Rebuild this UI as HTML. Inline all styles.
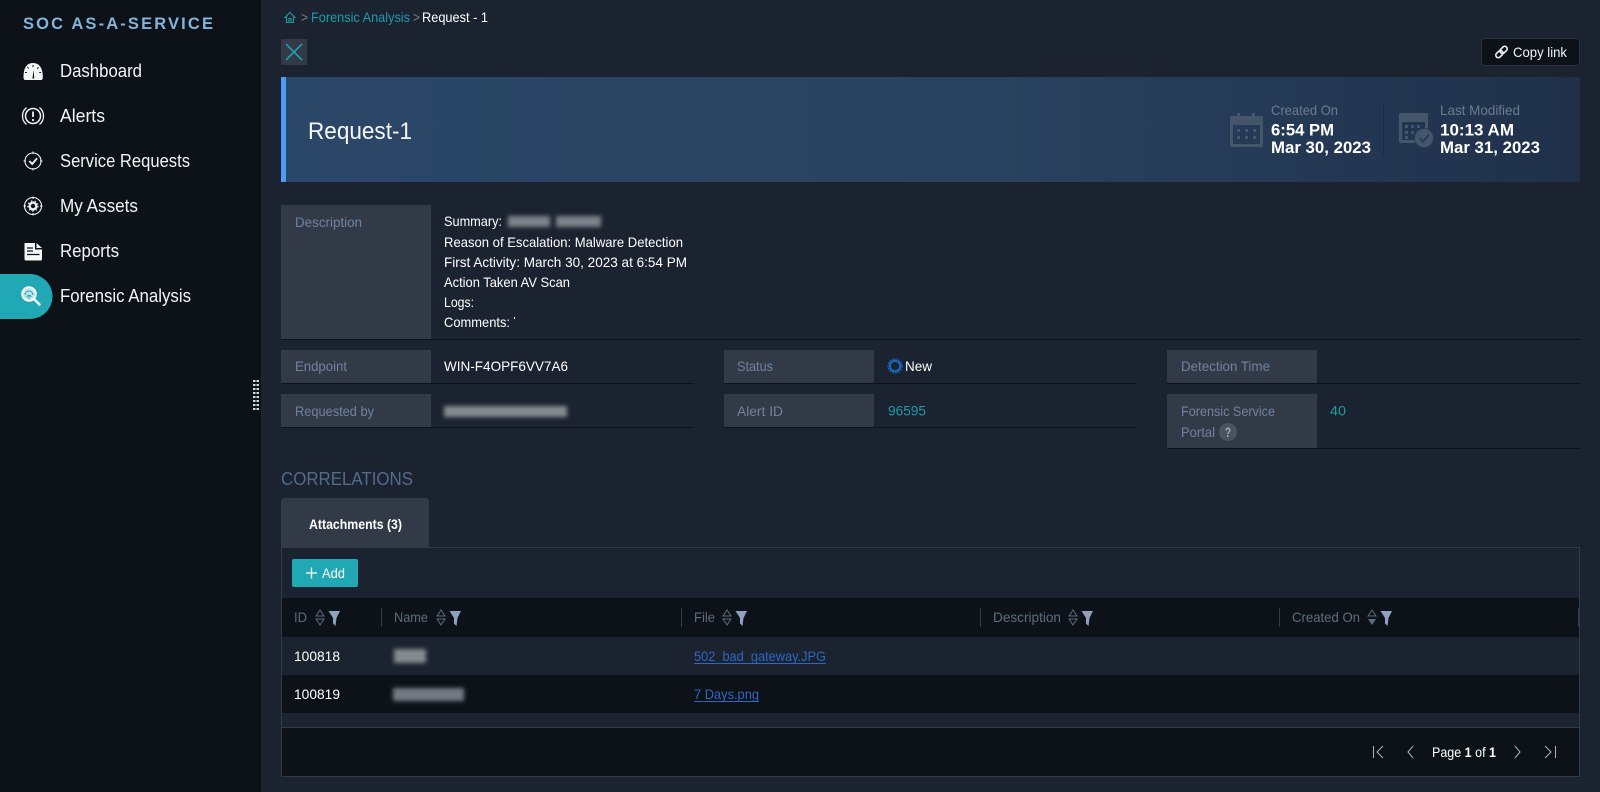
<!DOCTYPE html>
<html lang="en">
<head>
<meta charset="utf-8">
<title>Request-1</title>
<style>
html,body{margin:0;padding:0;background:#1c2330;width:1600px;height:792px;overflow:hidden}
svg{display:block}
text{font-family:"Liberation Sans",sans-serif;font-size:14px;fill:#fff}
.nav{font-size:18px;fill:#f2f4f6}
.lab{fill:#70829f}
.hd{fill:#5d6c7f}
.teal{fill:#1f9aa5}
.link{fill:#2c68c0}
.b{font-weight:bold}
</style>
</head>
<body>
<svg width="1600" height="792" viewBox="0 0 1600 792" xmlns="http://www.w3.org/2000/svg">
<defs>
<linearGradient id="bn" x1="0" x2="1" y1="0" y2="0"><stop offset="0" stop-color="#2b4768"/><stop offset="0.55" stop-color="#29425f"/><stop offset="1" stop-color="#20304a"/></linearGradient>
<filter id="bl" x="-20%" y="-40%" width="140%" height="180%"><feGaussianBlur stdDeviation="2"/></filter>
</defs>
<rect width="1600" height="792" fill="#1c2330"/>
<!-- sidebar -->
<rect width="261" height="792" fill="#0d1219"/>
<text x="23" y="29" class="b" style="font-size:16.500px;fill:#83b4dc" textLength="190" lengthAdjust="spacing">SOC AS-A-SERVICE</text>
<path d="M0 274H30A22.500 22.500 0 0 1 30 319H0Z" fill="#20a8b4"/>
<text x="60" y="77" class="nav" textLength="82" lengthAdjust="spacingAndGlyphs">Dashboard</text>
<text x="60" y="122" class="nav" textLength="45" lengthAdjust="spacingAndGlyphs">Alerts</text>
<text x="60" y="167" class="nav" textLength="130" lengthAdjust="spacingAndGlyphs">Service Requests</text>
<text x="60" y="212" class="nav" textLength="78" lengthAdjust="spacingAndGlyphs">My Assets</text>
<text x="60" y="257" class="nav" textLength="59" lengthAdjust="spacingAndGlyphs">Reports</text>
<text x="60" y="302" class="nav" textLength="131" lengthAdjust="spacingAndGlyphs">Forensic Analysis</text>
<!-- dashboard icon -->
<path d="M23.500 77C23.500 69 26 63 33 63S42.800 69 42.800 77Q42.800 80 41 80H25.300Q23.500 80 23.500 77Z" fill="#f4f6f8"/>
<path d="M33 65V67M27.500 67L28.700 68.700M38.500 67L37.300 68.700M25 72.500H26.800M39.200 72.500H41" stroke="#0d1219" stroke-width="1"/>
<path d="M33.800 70L32.400 78.500H34.200Z" fill="#0d1219"/>
<!-- alerts icon -->
<circle cx="33" cy="116" r="7.500" fill="none" stroke="#f2f4f6" stroke-width="1.500"/>
<path d="M26.500 107.500A11 11 0 0 0 26.500 124.500M39.500 107.500A11 11 0 0 1 39.500 124.500" fill="none" stroke="#f2f4f6" stroke-width="1.300"/>
<path d="M33 111.500V117" stroke="#f2f4f6" stroke-width="1.800"/><circle cx="33" cy="120" r="1.100" fill="#f2f4f6"/>
<!-- service requests icon -->
<circle cx="33" cy="161" r="8" fill="none" stroke="#f2f4f6" stroke-width="1.100"/>
<path d="M33 151.500V154M33 168V170.500M23.500 161H26M40 161H42.500" stroke="#f2f4f6" stroke-width="1"/>
<path d="M29.300 161L32.200 164L37 158.300" fill="none" stroke="#f2f4f6" stroke-width="1.900"/>
<!-- my assets icon -->
<circle cx="33" cy="206" r="8.500" fill="none" stroke="#f2f4f6" stroke-width="1.100"/>
<circle cx="33" cy="206" r="3.400" fill="none" stroke="#f2f4f6" stroke-width="2.400"/>
<circle cx="33" cy="206" r="5.200" fill="none" stroke="#f2f4f6" stroke-width="1" stroke-dasharray="1.400 2.300"/>
<path d="M33 196.500V199M33 213V215.500M23.500 206H26M40 206H42.500" stroke="#f2f4f6" stroke-width="1"/>
<!-- reports icon -->
<path d="M24.500 243H35V249.500H42V259Q42 260.500 40.500 260.500H26Q24.500 260.500 24.500 259Z" fill="#f4f6f8"/>
<path d="M36.500 243L42 248H36.500Z" fill="#f4f6f8"/>
<path d="M27 248H33M27 251H33M27 254.500H39.500" stroke="#0d1219" stroke-width="1.300"/>
<!-- forensic icon -->
<circle cx="29" cy="294" r="6.800" fill="#bfe6ea" stroke="#fff" stroke-width="1.800"/>
<path d="M25 295A4 4 0 0 1 33 295M26.800 297A2.300 2.300 0 0 1 31.200 297M29 295.500V299" fill="none" stroke="#20a8b4" stroke-width="1"/>
<path d="M34 299L39.500 304.500" stroke="#fff" stroke-width="2.400" stroke-linecap="round"/>
<!-- handle -->
<g fill="#d8dade">
<rect x="253" y="380" width="2.500" height="2"/><rect x="256.500" y="380" width="2.500" height="2"/>
<rect x="253" y="384" width="2.500" height="2"/><rect x="256.500" y="384" width="2.500" height="2"/>
<rect x="253" y="388" width="2.500" height="2"/><rect x="256.500" y="388" width="2.500" height="2"/>
<rect x="253" y="392" width="2.500" height="2"/><rect x="256.500" y="392" width="2.500" height="2"/>
<rect x="253" y="396" width="2.500" height="2"/><rect x="256.500" y="396" width="2.500" height="2"/>
<rect x="253" y="400" width="2.500" height="2"/><rect x="256.500" y="400" width="2.500" height="2"/>
<rect x="253" y="404" width="2.500" height="2"/><rect x="256.500" y="404" width="2.500" height="2"/>
<rect x="253" y="408" width="2.500" height="2"/><rect x="256.500" y="408" width="2.500" height="2"/>
</g>
<!-- breadcrumb -->
<path d="M284.500 18L290 12.500L295.500 18M286.500 16.500V22.500H289V18.500H291V22.500H293.500V16.500" fill="none" stroke="#1f9aa5" stroke-width="1.100"/>
<text x="301" y="22" style="fill:#7b818a" textLength="7" lengthAdjust="spacingAndGlyphs">&gt;</text>
<text x="311" y="22" class="teal" textLength="99" lengthAdjust="spacingAndGlyphs">Forensic Analysis</text>
<text x="413" y="22" style="fill:#7b818a" textLength="7" lengthAdjust="spacingAndGlyphs">&gt;</text>
<text x="422" y="22" textLength="66" lengthAdjust="spacingAndGlyphs">Request - 1</text>
<!-- close -->
<rect x="281" y="39" width="26" height="26" fill="#323a47"/>
<path d="M286 44L302 60M302 44L286 60" stroke="#20a8b4" stroke-width="1.500"/>
<!-- copy link -->
<rect x="1481.500" y="38.500" width="98" height="27" rx="3" fill="#0d1219" stroke="#2a323e"/>
<g fill="none" stroke="#f2f4f6" stroke-width="1.600" transform="rotate(-45 1501.500 52)">
<rect x="1494.500" y="49.500" width="8" height="5" rx="2.500"/><rect x="1500.500" y="49.500" width="8" height="5" rx="2.500"/>
</g>
<text x="1513" y="57" textLength="54" lengthAdjust="spacingAndGlyphs" style="fill:#f2f4f6">Copy link</text>
<!-- banner -->
<rect x="281" y="77" width="1299" height="105" fill="url(#bn)"/>
<rect x="281" y="77" width="5" height="105" fill="#4e9cf5"/>
<text x="308" y="139" style="font-size:24px;fill:#f4f6f8" textLength="104" lengthAdjust="spacingAndGlyphs">Request-1</text>
<!-- calendar 1 -->
<g fill="#45566b">
<path d="M1232 116H1261Q1263 116 1263 118V145Q1263 147 1261 147H1232Q1230 147 1230 145V118Q1230 116 1232 116ZM1233 125V144H1260V125Z" fill-rule="evenodd"/>
<rect x="1237" y="113" width="3" height="5"/><rect x="1252" y="113" width="3" height="5"/>
<rect x="1237" y="129" width="3" height="3"/><rect x="1245" y="129" width="3" height="3"/><rect x="1253" y="129" width="3" height="3"/>
<rect x="1237" y="136" width="3" height="3"/><rect x="1245" y="136" width="3" height="3"/><rect x="1253" y="136" width="3" height="3"/>
</g>
<text x="1271" y="115" style="fill:#6b7c90" textLength="67" lengthAdjust="spacingAndGlyphs">Created On</text>
<text x="1271" y="135.500" class="b" style="font-size:17px" textLength="63" lengthAdjust="spacingAndGlyphs">6:54 PM</text>
<text x="1271" y="153" class="b" style="font-size:17px" textLength="100" lengthAdjust="spacingAndGlyphs">Mar 30, 2023</text>
<rect x="1383" y="104" width="1" height="51" fill="#1c2b40"/>
<!-- calendar 2 -->
<g fill="#45566b">
<path d="M1401 113H1426Q1428 113 1428 115V141Q1428 143 1426 143H1401Q1399 143 1399 141V115Q1399 113 1401 113ZM1402 122V140H1425V122Z" fill-rule="evenodd"/>
<rect x="1405" y="125" width="3" height="3"/><rect x="1411" y="125" width="3" height="3"/><rect x="1417" y="125" width="3" height="3"/>
<rect x="1405" y="131" width="3" height="3"/><rect x="1411" y="131" width="3" height="3"/><rect x="1405" y="136" width="3" height="3"/>
<circle cx="1424" cy="138" r="9.500" stroke="#263b57" stroke-width="1"/>
</g>
<path d="M1419.500 138L1423 141.500L1429 134.500" fill="none" stroke="#263b57" stroke-width="1.800"/>
<text x="1440" y="115" style="fill:#6b7c90" textLength="80" lengthAdjust="spacingAndGlyphs">Last Modified</text>
<text x="1440" y="135.500" class="b" style="font-size:17px" textLength="74" lengthAdjust="spacingAndGlyphs">10:13 AM</text>
<text x="1440" y="153" class="b" style="font-size:17px" textLength="100" lengthAdjust="spacingAndGlyphs">Mar 31, 2023</text>
<!-- description -->
<rect x="281" y="205" width="150" height="134" fill="#323a47"/>
<rect x="281" y="339" width="1299" height="1" fill="#0d1219"/>
<text x="295" y="227" class="lab" textLength="67" lengthAdjust="spacingAndGlyphs">Description</text>
<text x="444" y="226" textLength="58" lengthAdjust="spacingAndGlyphs">Summary:</text>
<rect x="508" y="216" width="42" height="11" fill="#7d8289" filter="url(#bl)"/>
<rect x="556" y="216" width="45" height="11" fill="#7d8289" filter="url(#bl)"/>
<text x="444" y="247" textLength="239" lengthAdjust="spacingAndGlyphs">Reason of Escalation: Malware Detection</text>
<text x="444" y="267" textLength="243" lengthAdjust="spacingAndGlyphs">First Activity: March 30, 2023 at 6:54 PM</text>
<text x="444" y="287" textLength="126" lengthAdjust="spacingAndGlyphs">Action Taken AV Scan</text>
<text x="444" y="307" textLength="30" lengthAdjust="spacingAndGlyphs">Logs:</text>
<text x="444" y="327" textLength="66" lengthAdjust="spacingAndGlyphs">Comments:</text>
<rect x="514" y="317" width="1" height="2" fill="#fff"/>
<!-- fields -->
<rect x="281" y="350" width="150" height="33" fill="#323a47"/><rect x="281" y="383" width="413" height="1" fill="#0d1219"/>
<rect x="281" y="394" width="150" height="33" fill="#323a47"/><rect x="281" y="427" width="413" height="1" fill="#0d1219"/>
<rect x="724" y="350" width="150" height="33" fill="#323a47"/><rect x="724" y="383" width="413" height="1" fill="#0d1219"/>
<rect x="724" y="394" width="150" height="33" fill="#323a47"/><rect x="724" y="427" width="413" height="1" fill="#0d1219"/>
<rect x="1167" y="350" width="150" height="33" fill="#323a47"/><rect x="1167" y="383" width="413" height="1" fill="#0d1219"/>
<rect x="1167" y="394" width="150" height="54" fill="#323a47"/><rect x="1167" y="448" width="413" height="1" fill="#0d1219"/>
<text x="295" y="371" class="lab" textLength="52" lengthAdjust="spacingAndGlyphs">Endpoint</text>
<text x="444" y="371" textLength="124" lengthAdjust="spacingAndGlyphs">WIN-F4OPF6VV7A6</text>
<text x="295" y="416" class="lab" textLength="79" lengthAdjust="spacingAndGlyphs">Requested by</text>
<rect x="444" y="406" width="123" height="11" fill="#858a90" filter="url(#bl)"/>
<text x="737" y="371" class="lab" textLength="36" lengthAdjust="spacingAndGlyphs">Status</text>
<circle cx="895" cy="366" r="5.200" fill="none" stroke="#1b64b4" stroke-width="2.200"/>
<circle cx="895" cy="366" r="7" fill="none" stroke="#1b64b4" stroke-width="1.400" stroke-dasharray="1.700 1.300"/>
<text x="905" y="371" textLength="27" lengthAdjust="spacingAndGlyphs">New</text>
<text x="737" y="416" class="lab" textLength="46" lengthAdjust="spacingAndGlyphs">Alert ID</text>
<text x="888" y="415.500" class="teal" textLength="38" lengthAdjust="spacingAndGlyphs">96595</text>
<text x="1181" y="416" class="lab" textLength="94" lengthAdjust="spacingAndGlyphs">Forensic Service</text>
<text x="1181" y="371" class="lab" textLength="89" lengthAdjust="spacingAndGlyphs">Detection Time</text>
<text x="1181" y="437" class="lab" textLength="34" lengthAdjust="spacingAndGlyphs">Portal</text>
<circle cx="1228" cy="432" r="9" fill="#47535f"/>
<text x="1225" y="437" style="fill:#9fb0c4" class="b" textLength="6" lengthAdjust="spacingAndGlyphs">?</text>
<text x="1330" y="415.500" class="teal" textLength="16" lengthAdjust="spacingAndGlyphs">40</text>
<!-- correlations -->
<text x="281" y="485" style="font-size:18px;fill:#546a8a" textLength="132" lengthAdjust="spacingAndGlyphs">CORRELATIONS</text>
<path d="M281 547V502Q281 498 285 498H425Q429 498 429 502V547Z" fill="#323a47"/>
<text x="309" y="529" class="b" textLength="93" lengthAdjust="spacingAndGlyphs">Attachments (3)</text>
<rect x="281.500" y="547.500" width="1298" height="229" fill="none" stroke="#323a47"/>
<rect x="292" y="559" width="66" height="28" rx="2" fill="#20a8b4"/>
<path d="M306 573H317M311.500 567.500V578.500" stroke="#fff" stroke-width="1.300"/>
<text x="322" y="578" textLength="23" lengthAdjust="spacingAndGlyphs">Add</text>
<!-- table -->
<rect x="282" y="598" width="1297" height="39" fill="#0d1219"/>
<rect x="282" y="675" width="1297" height="38" fill="#0d1219"/>
<rect x="381" y="608" width="1" height="19" fill="#333b47"/>
<rect x="681" y="608" width="1" height="19" fill="#333b47"/>
<rect x="980" y="608" width="1" height="19" fill="#333b47"/>
<rect x="1279" y="608" width="1" height="19" fill="#333b47"/>
<rect x="1578" y="608" width="1" height="19" fill="#333b47"/>
<text x="294" y="622" class="hd" textLength="13" lengthAdjust="spacingAndGlyphs">ID</text>
<text x="394" y="622" class="hd" textLength="34" lengthAdjust="spacingAndGlyphs">Name</text>
<text x="694" y="622" class="hd" textLength="21" lengthAdjust="spacingAndGlyphs">File</text>
<text x="993" y="622" class="hd" textLength="68" lengthAdjust="spacingAndGlyphs">Description</text>
<text x="1292" y="622" class="hd" textLength="68" lengthAdjust="spacingAndGlyphs">Created On</text>
<g fill="none" stroke="#5d6c7f" stroke-width="1">
<path d="M316 616L320 610L324 616ZM316 619L320 625L324 619Z"/>
<path d="M437 616L441 610L445 616ZM437 619L441 625L445 619Z"/>
<path d="M723 616L727 610L731 616ZM723 619L727 625L731 619Z"/>
<path d="M1069 616L1073 610L1077 616ZM1069 619L1073 625L1077 619Z"/>
<path d="M1368 616L1372 610L1376 616Z"/>
</g>
<path d="M1368 619L1372 625L1376 619Z" fill="#5d6c7f"/>
<g fill="#8ea2bf">
<path d="M328.500 611H340L336.500 618L335.500 626L333 623.500V618Z"/>
<path d="M449.500 611H461L457.500 618L456.500 626L454 623.500V618Z"/>
<path d="M735.500 611H747L743.500 618L742.500 626L740 623.500V618Z"/>
<path d="M1081.500 611H1093L1089.500 618L1088.500 626L1086 623.500V618Z"/>
<path d="M1380.500 611H1392L1388.500 618L1387.500 626L1385 623.500V618Z"/>
</g>
<text x="294" y="661" textLength="46" lengthAdjust="spacingAndGlyphs">100818</text>
<text x="294" y="699" textLength="46" lengthAdjust="spacingAndGlyphs">100819</text>
<rect x="394" y="649" width="32" height="14" fill="#858a90" filter="url(#bl)"/>
<rect x="393" y="688" width="71" height="13" fill="#747981" filter="url(#bl)"/>
<text x="694" y="661" class="link" textLength="132" lengthAdjust="spacingAndGlyphs">502_bad_gateway.JPG</text>
<rect x="694" y="663" width="132" height="1" fill="#2c68c0"/>
<text x="694" y="699" class="link" textLength="65" lengthAdjust="spacingAndGlyphs">7 Days.png</text>
<rect x="694" y="701" width="65" height="1" fill="#2c68c0"/>
<!-- footer -->
<rect x="282" y="728" width="1297" height="48" fill="#0d1219"/>
<rect x="282" y="727" width="1297" height="1" fill="#323a47"/>
<g fill="none" stroke="#aab3bf" stroke-width="1">
<path d="M1373.500 746V758M1383 746L1377 752L1383 758"/>
<path d="M1413 746L1408 752L1413 758"/>
<path d="M1515 746L1520 752L1515 758"/>
<path d="M1545 746L1551 752L1545 758M1555.500 746V758"/>
</g>
<text x="1432" y="757" textLength="64" lengthAdjust="spacingAndGlyphs">Page <tspan class="b">1</tspan> of <tspan class="b">1</tspan></text>
</svg>
</body>
</html>
